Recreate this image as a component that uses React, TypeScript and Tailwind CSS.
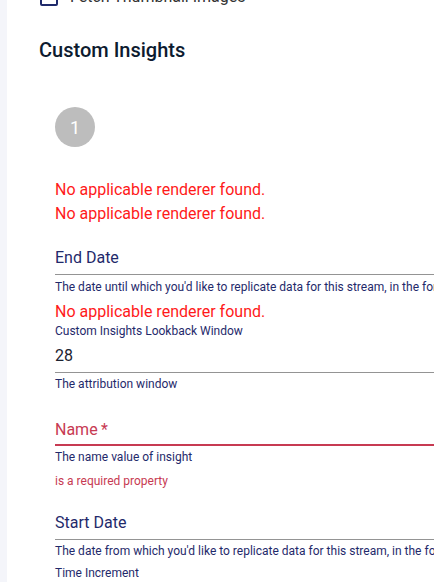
export default function App() {
  const navy = "text-[#1f2a6b]";

  return (
    <div className="flex h-[582px] w-[434px] overflow-hidden bg-white font-['Roboto',sans-serif]">
      <div className="w-[7px] shrink-0 bg-[#f4f5fa]" />

      <main className="flex min-w-0 flex-1 flex-col pl-[32px]">
        {/* scrolled-away checkbox row */}
        <div className="-mt-[13px] flex h-[20px] items-center gap-[12px] pl-[1px]">
          <span className="h-[18px] w-[18px] shrink-0 rounded-[2px] border-2 border-[#1f2a6b]" />
          <span className="whitespace-nowrap text-[16px] leading-[20px] text-[#333]">Fetch Thumbnail Images</span>
        </div>

        <h2 className="mt-[31px] text-[20px] font-medium leading-[24px] text-[#0d1b2f]">Custom Insights</h2>

        <section className="ml-[16px] flex flex-col">
          <div className="mt-[45px] flex h-[40px] w-[40px] items-center justify-center rounded-full bg-[#bdbdbd] text-[18px] text-white">
            1
          </div>

          <p className="mt-[31px] text-[16px] leading-[24px] text-[#ff1a1a]">No applicable renderer found.</p>
          <p className="text-[16px] leading-[24px] text-[#ff1a1a]">No applicable renderer found.</p>

          <div className="mt-[20px] border-b border-[#949494] pb-[4px]">
            <p className={`text-[16px] leading-[24px] ${navy}`}>End Date</p>
          </div>
          <p className={`mt-[2px] whitespace-nowrap text-[12px] leading-[20px] ${navy}`}>
            The date until which you'd like to replicate data for this stream, in the format YYYY-MM-DDT00:00:00Z.
          </p>

          <p className="mt-[3px] text-[16px] leading-[24px] text-[#ff1a1a]">No applicable renderer found.</p>
          <label className={`-mt-[1px] text-[12px] leading-[16px] ${navy}`}>Custom Insights Lookback Window</label>
          <div className="mt-[5px] border-b border-[#949494] pb-[4px]">
            <p className="text-[16px] leading-[24px] text-[#1c2230]">28</p>
          </div>
          <p className={`mt-[1px] text-[12px] leading-[20px] ${navy}`}>The attribution window</p>

          <div className="mt-[24px] border-b-2 border-[#c73a52] pb-[2px]">
            <p className="text-[16px] leading-[24px] text-[#c73a52]">Name&thinsp;*</p>
          </div>
          <p className={`mt-[1px] text-[12px] leading-[20px] ${navy}`}>The name value of insight</p>
          <p className="mt-[4px] text-[12px] leading-[20px] text-[#c73a52]">is a required property</p>

          <div className="mt-[20px] border-b border-[#949494] pb-[4px]">
            <p className={`text-[16px] leading-[24px] ${navy}`}>Start Date</p>
          </div>
          <p className={`mt-[1px] whitespace-nowrap text-[12px] leading-[20px] ${navy}`}>
            The date from which you'd like to replicate data for this stream, in the format YYYY-MM-DDT00:00:00Z.
          </p>
          <p className={`mt-[2px] text-[12px] leading-[20px] ${navy}`}>Time Increment</p>
        </section>
      </main>
    </div>
  );
}
